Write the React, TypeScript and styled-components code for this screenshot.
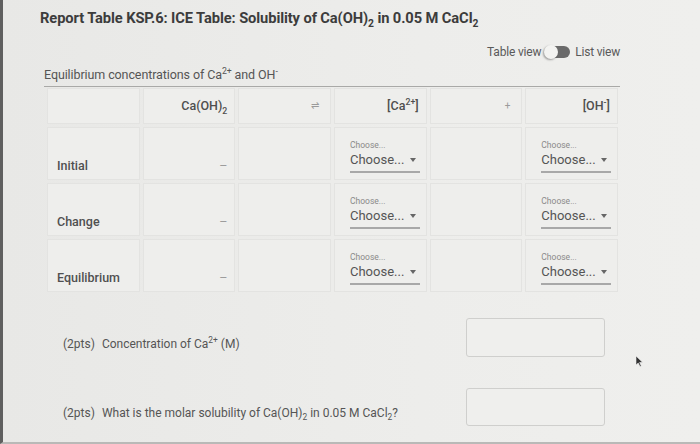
import React from 'react';
import styled, { createGlobalStyle } from 'styled-components';

const GlobalStyle = createGlobalStyle`
  html, body {
    margin: 0;
    padding: 0;
    background: #ebebe9;
  }
  body {
    font-family: Roboto, "Noto Sans", "Liberation Sans", sans-serif;
    color: #555;
  }
  sup, sub {
    font-size: 0.7em;
    line-height: 0;
  }
`;

const Page = styled.div`
  position: relative;
  box-sizing: border-box;
  width: 700px;
  height: 444px;
  padding: 8px 80px 0 37px;
  border-left: 3px solid #5f5f5f;
  border-bottom: 2px solid #b9b9b7;
  background: linear-gradient(90deg, #e8e8e6 0%, #ededeb 60%, #efefed 100%);
  overflow: hidden;
`;

const Title = styled.h1`
  margin: 0;
  font-size: 14.7px;
  line-height: 20px;
  font-weight: 700;
  color: #3c3c3c;
  letter-spacing: -0.1px;
`;

const ViewToggle = styled.div`
  display: flex;
  justify-content: flex-end;
  align-items: center;
  gap: 3px;
  margin-top: 14px;
  height: 20px;
  font-size: 12px;
  letter-spacing: -0.2px;
  color: #5a5a5a;
`;

const Switch = styled.span`
  position: relative;
  display: inline-block;
  width: 24px;
  height: 12px;
  margin: 0 2px;
  border-radius: 6px;
  background: #6a6a6a;
`;

const Knob = styled.span`
  position: absolute;
  left: -2px;
  top: -1px;
  width: 14px;
  height: 14px;
  border-radius: 50%;
  background: #f3f3f1;
  box-shadow: -1px 1px 2px rgba(0, 0, 0, 0.35);
`;

const Section = styled.section`
  margin: 4px 0 0 4px;
`;

const SectionHeading = styled.div`
  font-size: 12.5px;
  line-height: 18px;
  padding-bottom: 2px;
  border-bottom: 1px solid #a9a9a7;
  color: #555;
  letter-spacing: -0.1px;
`;

const Grid = styled.div`
  display: grid;
  grid-template-columns: repeat(6, 1fr);
  grid-template-rows: 36px repeat(3, 53px);
  gap: 3px;
  margin: 1px 2px 0 3px;
`;

const Cell = styled.div<{ $align?: 'left' | 'right'; $valign?: 'center' | 'bottom' }>`
  box-sizing: border-box;
  display: flex;
  justify-content: ${({ $align }) => ($align === 'left' ? 'flex-start' : 'flex-end')};
  align-items: ${({ $valign }) => ($valign === 'bottom' ? 'flex-end' : 'center')};
  padding: 0 7px 0 9px;
  background: #eeeeec;
  border: 1px solid #e3e3e1;
  font-size: 12.5px;
  line-height: 16px;
`;

const HeadText = styled.span`
  font-weight: 500;
  color: #4f4f4f;
`;

const Symbol = styled.span`
  font-size: 10px;
  color: #9a9a9a;
  padding-right: 4px;
`;

const RowLabel = styled.span`
  font-weight: 500;
  color: #505050;
  padding-bottom: 5px;
`;

const Dash = styled.span`
  color: #9c9c9c;
  padding: 0 0 5px;
`;

const SelectCell = styled.div`
  box-sizing: border-box;
  padding: 11px 0 0 15px;
  background: #eeeeec;
  border: 1px solid #e3e3e1;
`;

const Select = styled.div`
  width: 70px;
  border-bottom: 2px solid #a8a8a8;
  padding-bottom: 3px;
`;

const SelectHint = styled.div`
  font-size: 8.5px;
  line-height: 12px;
  color: #8a8a8a;
`;

const SelectValue = styled.div`
  display: flex;
  align-items: center;
  justify-content: space-between;
  font-size: 13px;
  line-height: 17px;
  color: #555;
`;

const Caret = styled.span`
  width: 0;
  height: 0;
  margin-right: 4px;
  border-left: 3px solid transparent;
  border-right: 3px solid transparent;
  border-top: 4px solid #666;
`;

const Question = styled.div<{ $top: number }>`
  display: flex;
  justify-content: space-between;
  align-items: flex-end;
  margin: ${({ $top }) => $top}px 15px 0 23px;
  font-size: 12px;
  color: #555;
`;

const QuestionText = styled.span`
  padding-bottom: 6px;
`;

const Points = styled.span`
  margin-right: 7px;
`;

const AnswerBox = styled.div<{ $height: number }>`
  box-sizing: border-box;
  width: 139px;
  height: ${({ $height }) => $height}px;
  border: 1px solid #cfcfcd;
  border-radius: 3px;
  background: #efefed;
`;

const Pointer = styled.svg`
  position: absolute;
  left: 632px;
  top: 355px;
`;

const Choose: React.FC = () => (
  <SelectCell>
    <Select>
      <SelectHint>Choose...</SelectHint>
      <SelectValue>
        Choose...
        <Caret />
      </SelectValue>
    </Select>
  </SelectCell>
);

const rows = ['Initial', 'Change', 'Equilibrium'];

export default function App() {
  return (
    <>
      <GlobalStyle />
      <Page>
        <Title>
          Report Table KSP.6: ICE Table: Solubility of Ca(OH)<sub>2</sub> in 0.05 M CaCl<sub>2</sub>
        </Title>
        <ViewToggle>
          <span>Table view</span>
          <Switch>
            <Knob />
          </Switch>
          <span>List view</span>
        </ViewToggle>
        <Section>
          <SectionHeading>
            Equilibrium concentrations of Ca<sup>2+</sup> and OH<sup>-</sup>
          </SectionHeading>
          <Grid>
            <Cell />
            <Cell>
              <HeadText>
                Ca(OH)<sub>2</sub>
              </HeadText>
            </Cell>
            <Cell>
              <Symbol>⇌</Symbol>
            </Cell>
            <Cell>
              <HeadText>
                [Ca<sup>2+</sup>]
              </HeadText>
            </Cell>
            <Cell>
              <Symbol>+</Symbol>
            </Cell>
            <Cell>
              <HeadText>
                [OH<sup>-</sup>]
              </HeadText>
            </Cell>
            {rows.map((r) => (
              <React.Fragment key={r}>
                <Cell $align="left" $valign="bottom">
                  <RowLabel>{r}</RowLabel>
                </Cell>
                <Cell $valign="bottom">
                  <Dash>–</Dash>
                </Cell>
                <Cell />
                <Choose />
                <Cell />
                <Choose />
              </React.Fragment>
            ))}
          </Grid>
        </Section>
        <Question $top={26}>
          <QuestionText>
            <Points>(2pts)</Points>Concentration of Ca<sup>2+</sup> (M)
          </QuestionText>
          <AnswerBox $height={39} />
        </Question>
        <Question $top={31}>
          <QuestionText>
            <Points>(2pts)</Points>What is the molar solubility of Ca(OH)<sub>2</sub> in 0.05 M CaCl
            <sub>2</sub>?
          </QuestionText>
          <AnswerBox $height={38} />
        </Question>
        <Pointer width="8" height="12" viewBox="0 0 8 12">
          <path d="M1 1 L1 10 L3.2 8 L5 11.5 L6.3 10.9 L4.6 7.5 L7.5 7.3 Z" fill="#333" stroke="#eee" strokeWidth="0.6" />
        </Pointer>
      </Page>
    </>
  );
}
